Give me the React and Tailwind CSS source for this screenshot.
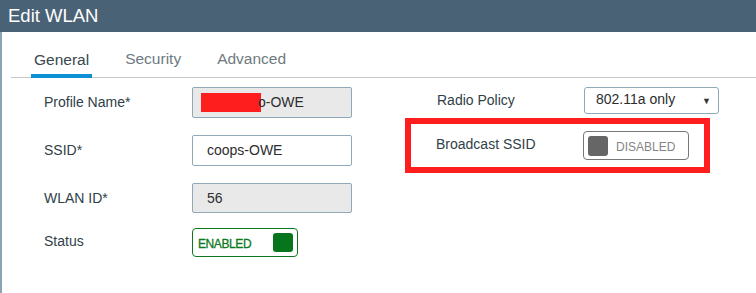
export default function App() {
  const font = { fontFamily: '"Liberation Sans", Arial, sans-serif' };

  return (
    <div className="w-[756px] h-[293px] bg-white overflow-hidden" style={font}>
      {/* header */}
      <div className="h-[32px] bg-[#4a6276] flex items-center pl-[8px]">
        <span className="text-white text-[18.5px] leading-none">Edit WLAN</span>
      </div>

      <div className="h-[261px] border-l-2 border-[#8aa3b5] pl-[9px]">
        {/* tabs */}
        <div className="flex items-end h-[46px] border-b border-[#c8c8c8] pl-[20px]">
          <div className="px-[3px] pb-[7px] border-b-4 border-[#0d8fd4] text-[15.5px] text-[#39474f] leading-none -mb-px">
            General
          </div>
          <div className="ml-[33px] pb-[11px] text-[15.5px] text-[#6e7a80] leading-none">Security</div>
          <div className="ml-[36px] pb-[11px] text-[15.5px] text-[#6e7a80] leading-none">Advanced</div>
        </div>

        <div className="flex pt-[9px]">
          {/* left column */}
          <div className="pl-[33px] w-[352px] flex flex-col gap-[17px]">
            <div className="flex items-center h-[31px]">
              <span className="w-[148px] text-[14px] text-[#2f4147]">Profile Name*</span>
              <div className="w-[160px] h-[31px] bg-[#e9e9e9] border border-[#90a9b7] rounded-[2px] flex items-center pl-[8px] text-[14px] text-[#2d2d2d]">
                <span className="w-[60px] h-[19px] bg-[#fe1e1e]" />
                <span className="-ml-[3px]">o-OWE</span>
              </div>
            </div>
            <div className="flex items-center h-[31px]">
              <span className="w-[148px] text-[14px] text-[#2f4147]">SSID*</span>
              <div className="w-[160px] h-[31px] bg-white border border-[#90a9b7] rounded-[2px] flex items-center pl-[14px] text-[14px] text-[#2d2d2d]">
                coops-OWE
              </div>
            </div>
            <div className="flex items-center h-[30px]">
              <span className="w-[148px] text-[14px] text-[#2f4147]">WLAN ID*</span>
              <div className="w-[160px] h-[30px] bg-[#e9e9e9] border border-[#90a9b7] rounded-[2px] flex items-center pl-[14px] text-[14px] text-[#2d2d2d]">
                56
              </div>
            </div>
            <div className="flex items-center h-[29px] -mt-[2px]">
              <span className="w-[148px] text-[14px] text-[#2f4147] -mt-[3px]">Status</span>
              <div className="w-[106px] h-[29px] border border-[#0b7a1e] rounded-[4px] flex items-center justify-between pl-[5px] pr-[4px]">
                <span className="text-[12px] text-[#0b7a1e] mt-[3px] tracking-[-0.4px]" style={{ WebkitTextStroke: "0.3px #0b7a1e" }}>
                  ENABLED
                </span>
                <span className="w-[20px] h-[19px] bg-[#07751b] rounded-[3px]" />
              </div>
            </div>
          </div>

          {/* right column */}
          <div className="pl-[42px] flex flex-col gap-[4px]">
            <div className="flex items-center h-[27px] pl-[32px]">
              <span className="w-[147px] text-[14px] text-[#2f4147]">Radio Policy</span>
              <div className="w-[135px] h-[27px] border border-[#90a9b7] rounded-[3px] flex items-center justify-between pl-[11px] pr-[7px] text-[14px] text-[#2d2d2d]">
                <span className="-mt-[3px]">802.11a only</span>
                <span className="text-[9px] text-[#333] mt-[2px]">▼</span>
              </div>
            </div>
            <div className="w-[305px] h-[55px] border-[6px] border-[#fe1e1e] flex items-center pl-[25px]">
              <span className="w-[147px] text-[14px] text-[#2f4147] -mt-[3px]">Broadcast SSID</span>
              <div className="w-[106px] h-[29px] border border-[#777] rounded-[4px] flex items-center pl-[4px]">
                <span className="w-[20px] h-[20px] bg-[#666666] rounded-[3px]" />
                <span className="ml-[8px] text-[12px] text-[#858585] mt-[2px]">DISABLED</span>
              </div>
            </div>
          </div>
        </div>
      </div>
    </div>
  );
}
